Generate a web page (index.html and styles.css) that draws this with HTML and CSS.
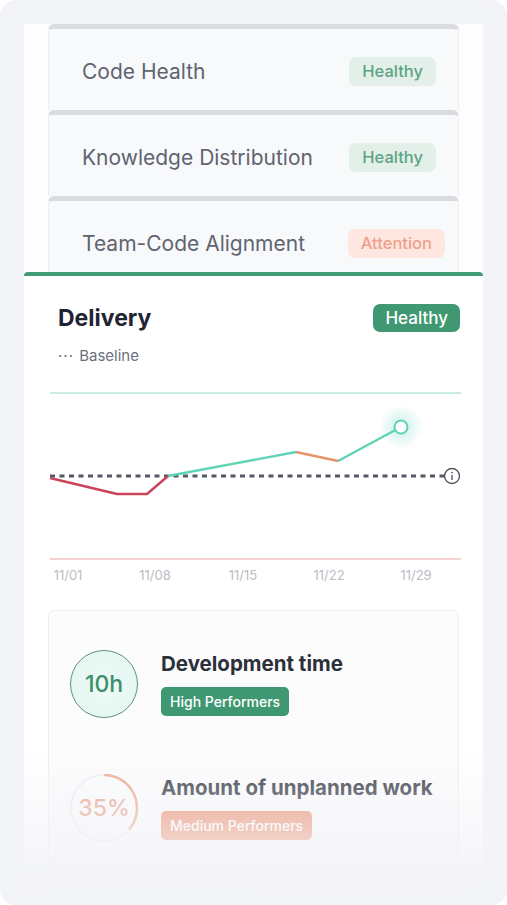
FILE: index.html
```html
<!DOCTYPE html>
<html>
<head>
<meta charset="utf-8">
<link rel="stylesheet" href="styles.css">
</head>
<body>
<div class="frame">
  <div class="panel">
    <div class="stack">
      <div class="scard">
        <span class="slabel">Code Health</span>
        <span class="spill ok">Healthy</span>
      </div>
      <div class="scard">
        <span class="slabel">Knowledge Distribution</span>
        <span class="spill ok">Healthy</span>
      </div>
      <div class="scard">
        <span class="slabel">Team-Code Alignment</span>
        <span class="spill warn">Attention</span>
      </div>
    </div>

    <div class="delivery">
      <div class="dhead">
        <h1 class="dtitle">Delivery</h1>
        <span class="dpill">Healthy</span>
      </div>
      <div class="legend"><span class="dots">···</span> Baseline</div>

      <svg class="chart" width="459" height="220" viewBox="0 0 459 220">
        <defs>
          <radialGradient id="glow">
            <stop offset="0" stop-color="#5ed3b5" stop-opacity="0.35"/>
            <stop offset="1" stop-color="#5ed3b5" stop-opacity="0"/>
          </radialGradient>
        </defs>
        <line x1="26" y1="13" x2="437" y2="13" stroke="#8fdcc7" stroke-width="1.2"/>
        <line x1="26" y1="179" x2="437" y2="179" stroke="#f2a3aa" stroke-width="1.2"/>
        <line x1="26" y1="96" x2="420" y2="96" stroke="#535863" stroke-width="2.8" stroke-dasharray="5 4.5"/>
        <circle cx="428" cy="96" r="7.5" fill="#fff" stroke="#535863" stroke-width="1.4"/>
        <circle cx="428" cy="92.6" r="0.9" fill="#535863"/>
        <line x1="428" y1="95" x2="428" y2="100" stroke="#535863" stroke-width="1.4"/>
        <polyline points="26,98 93,114 123,114 144,96" fill="none" stroke="#c9435b" stroke-width="2.4" stroke-linejoin="round"/>
        <polyline points="144,96 272,72" fill="none" stroke="#5ed3b5" stroke-width="2.4"/>
        <polyline points="272,72 314,81" fill="none" stroke="#e5946a" stroke-width="2.4"/>
        <polyline points="314,81 377,47" fill="none" stroke="#5ed3b5" stroke-width="2.4"/>
        <circle cx="377" cy="47" r="22" fill="url(#glow)"/>
        <circle cx="377" cy="47" r="6.5" fill="#fff" stroke="#5ed3b5" stroke-width="2"/>
        <g class="xlab">
          <text x="44" y="196">11/01</text>
          <text x="131" y="196">11/08</text>
          <text x="219" y="196">11/15</text>
          <text x="305" y="196">11/22</text>
          <text x="392" y="196">11/29</text>
        </g>
      </svg>

      <div class="metrics">
        <div class="mrow">
          <div class="ring good">10h</div>
          <div class="minfo">
            <div class="mtitle">Development time</div>
            <span class="mpill high">High Performers</span>
          </div>
        </div>
        <div class="mrow">
          <div class="ring mid">
            <svg class="arc" width="68" height="68" viewBox="0 0 68 68">
              <circle cx="34" cy="34" r="33" fill="none" stroke="#eceef1" stroke-width="2"/>
              <path d="M34 1 A33 33 0 0 1 59.3 55.2" fill="none" stroke="#eea68c" stroke-width="2.5"/>
            </svg>
            <span class="rtext">35%</span>
          </div>
          <div class="minfo">
            <div class="mtitle">Amount of unplanned work</div>
            <span class="mpill medium">Medium Performers</span>
          </div>
        </div>
      </div>
    </div>
  </div>
  <div class="fade"></div>
</div>
</body>
</html>
```

FILE: styles.css
```css
html, body {
  margin: 0;
  padding: 0;
  background: #ffffff;
}

body {
  font-family: Inter, "Noto Sans", sans-serif;
}

.frame {
  position: relative;
  width: 507px;
  height: 905px;
  background: #f3f4f7;
  border-radius: 16px;
  overflow: hidden;
  padding: 24px 24px 0;
  box-sizing: border-box;
}

.panel {
  background: #ffffff;
  height: 881px;
  display: flex;
  flex-direction: column;
}

.stack {
  padding: 0 24px;
  background: #fdfdfe;
  height: 248px;
  overflow: hidden;
  flex: none;
}

.scard {
  box-sizing: border-box;
  height: 86px;
  border-top: 5px solid #d8dbe0;
  border-radius: 6px 6px 0 0;
  border-left: 1px solid #eceef1;
  border-right: 1px solid #eceef1;
  background: #f8f9fb;
  display: flex;
  align-items: center;
  justify-content: space-between;
  padding: 4px 22px 0 33px;
}

.slabel {
  font-size: 21px;
  color: #5f6470;
}

.spill {
  font-size: 16.5px;
  font-weight: 500;
  padding: 0 13px;
  height: 29px;
  line-height: 29px;
  border-radius: 7px;
}

.spill.ok {
  background: #e2f0e9;
  color: #5ea383;
}

.spill.warn {
  background: #fde7e0;
  color: #efa18b;
  margin-right: -9px;
}

.delivery {
  border-top: 4px solid #3f9b72;
  border-radius: 4px 4px 0 0;
  flex: 1;
  display: flex;
  flex-direction: column;
}

.dhead {
  display: flex;
  align-items: center;
  justify-content: space-between;
  padding: 28px 23px 0 34px;
}

.dtitle {
  margin: 0;
  font-size: 23px;
  line-height: 28px;
  font-weight: 700;
  color: #1f2433;
}

.dpill {
  background: #3f9872;
  color: #ffffff;
  font-size: 17px;
  font-weight: 500;
  height: 28px;
  line-height: 28px;
  padding: 0 12px;
  border-radius: 7px;
}

.legend {
  margin: 14px 0 0 34px;
  font-size: 15px;
  line-height: 20px;
  color: #6b7080;
}

.dots {
  letter-spacing: 1px;
  margin-right: 1px;
}

.chart {
  display: block;
  margin-top: 14px;
}

.xlab text {
  font-family: Inter, sans-serif;
  font-size: 13px;
  fill: #b9bdc5;
  text-anchor: middle;
  dominant-baseline: middle;
}

.metrics {
  margin: 10px 24px 0;
  border: 1px solid #eceef1;
  border-radius: 6px;
  background: #fcfcfd;
  padding: 39px 0 0 21px;
  flex: 1;
  display: flex;
  flex-direction: column;
  gap: 56px;
}

.mrow {
  display: flex;
  align-items: flex-start;
  gap: 23px;
}

.ring {
  width: 66px;
  height: 66px;
  border-radius: 50%;
  display: flex;
  align-items: center;
  justify-content: center;
  font-size: 23px;
  font-weight: 500;
  flex: none;
  position: relative;
}

.ring.good {
  border: 1px solid #5e8f7b;
  background: radial-gradient(circle at 50% 50%, #eefaf7 0%, #e6f7f2 70%, #f5fcfa 100%);
  color: #3d8f6c;
}

.ring.mid {
  width: 68px;
  height: 68px;
  color: #eb9f86;
}

.arc {
  position: absolute;
  left: 0;
  top: 0;
}

.rtext {
  position: relative;
}

.minfo {
  display: flex;
  flex-direction: column;
  align-items: flex-start;
  padding-top: 1px;
}

.mtitle {
  font-size: 20.5px;
  line-height: 25px;
  font-weight: 700;
  color: #2c303a;
}

.mpill {
  margin-top: 11px;
  height: 29px;
  line-height: 29px;
  padding: 0 9px;
  border-radius: 5px;
  font-size: 14px;
  font-weight: 500;
}

.mpill.high {
  background: #3f9872;
  color: #ffffff;
}

.mpill.medium {
  background: #ee8e6d;
  color: #ffffff;
}

.fade {
  position: absolute;
  left: 0;
  right: 0;
  bottom: 0;
  height: 160px;
  background: linear-gradient(to bottom,
    rgba(243, 244, 247, 0) 0%,
    rgba(243, 244, 247, 0.35) 30%,
    rgba(243, 244, 247, 0.6) 55%,
    rgba(243, 244, 247, 0.95) 80%,
    rgba(243, 244, 247, 1) 100%);
  pointer-events: none;
}
```
